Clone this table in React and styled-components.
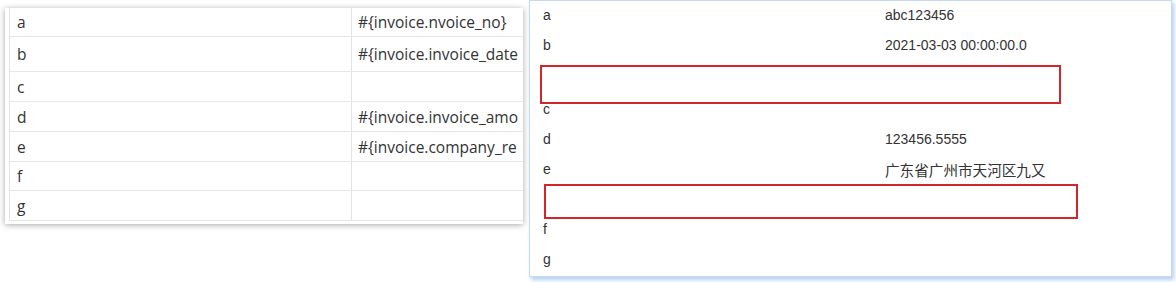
import React from "react";
import styled, { createGlobalStyle } from "styled-components";

const GlobalStyle = createGlobalStyle`
  html, body {
    margin: 0;
    padding: 0;
    background: #ffffff;
  }
`;

const Page = styled.div`
  width: 1176px;
  height: 282px;
  display: flex;
  align-items: flex-start;
  overflow: hidden;
  background: #fff;
`;

/* template sheet on the left */
const Sheet = styled.div`
  margin: 8px 0 0 5px;
  width: 518px;
  height: 216px;
  background: #fff;
  box-shadow: 0 1px 6px rgba(0, 0, 0, 0.35);
  padding-left: 4px;
  box-sizing: border-box;
  overflow: hidden;
`;

const SheetTable = styled.div`
  display: grid;
  grid-template-columns: 341px 180px;
  border-left: 1px solid #e3e3e3;
  font-family: "Open Sans", "Noto Sans CJK SC", sans-serif;
  font-size: 15.5px;
  color: #333;
`;

const Cell = styled.div`
  height: ${(p) => p.$h}px;
  box-sizing: border-box;
  display: flex;
  align-items: center;
  padding-left: ${(p) => (p.$value ? 6 : 7)}px;
  border-bottom: 1px solid #e6e6e6;
  border-left: ${(p) => (p.$value ? "1px solid #e3e3e3" : "none")};
  white-space: nowrap;
  overflow: hidden;
`;

/* rendered output on the right */
const Preview = styled.div`
  margin: 0 0 0 6px;
  width: 643px;
  height: 277px;
  box-sizing: border-box;
  background: #fff;
  border: 1px solid #c3daf4;
  box-shadow: 2px 3px 4px rgba(120, 170, 230, 0.55);
  font-family: "Liberation Sans", Arial, "Noto Sans CJK SC", sans-serif;
  font-size: 14px;
  color: #333;
`;

const Line = styled.div`
  height: 30px;
  display: grid;
  grid-template-columns: 342px 1fr;
  align-items: center;
  padding-left: 13px;
  margin-top: ${(p) => (p.$first ? -1 : 0)}px;
`;

const Cjk = styled.span`
  font-family: "Noto Sans CJK SC", sans-serif;
  font-size: 14.6px;
  color: #333;
`;

const Gap = styled.div`
  position: relative;
  height: ${(p) => p.$h}px;
`;

const Mark = styled.div`
  position: absolute;
  top: ${(p) => p.$top}px;
  left: ${(p) => p.$left}px;
  width: ${(p) => p.$w}px;
  height: ${(p) => p.$h}px;
  box-sizing: border-box;
  border: 2px solid #d1262d;
`;

const sheetRows = [
  ["a", "#{invoice.nvoice_no}", 29],
  ["b", "#{invoice.invoice_date", 35],
  ["c", "", 30],
  ["d", "#{invoice.invoice_amo", 30],
  ["e", "#{invoice.company_re", 30],
  ["f", "", 29],
  ["g", "", 30],
];

export default function App() {
  return (
    <Page>
      <GlobalStyle />
      <Sheet>
        <SheetTable>
          {sheetRows.map(([k, v, h]) => (
            <React.Fragment key={k}>
              <Cell $h={h}>{k}</Cell>
              <Cell $h={h} $value>
                {v}
              </Cell>
            </React.Fragment>
          ))}
        </SheetTable>
      </Sheet>
      <Preview>
        <Line $first>
          <span>a</span>
          <span>abc123456</span>
        </Line>
        <Line>
          <span>b</span>
          <span>2021-03-03 00:00:00.0</span>
        </Line>
        <Gap $h={34}>
          <Mark $top={5} $left={10} $w={521} $h={39} />
        </Gap>
        <Line>
          <span>c</span>
          <span></span>
        </Line>
        <Line>
          <span>d</span>
          <span>123456.5555</span>
        </Line>
        <Line>
          <span>e</span>
          <Cjk>广东省广州市天河区九又</Cjk>
        </Line>
        <Gap $h={30}>
          <Mark $top={0} $left={14} $w={534} $h={35} />
        </Gap>
        <Line>
          <span>f</span>
          <span></span>
        </Line>
        <Line>
          <span>g</span>
          <span></span>
        </Line>
      </Preview>
    </Page>
  );
}
